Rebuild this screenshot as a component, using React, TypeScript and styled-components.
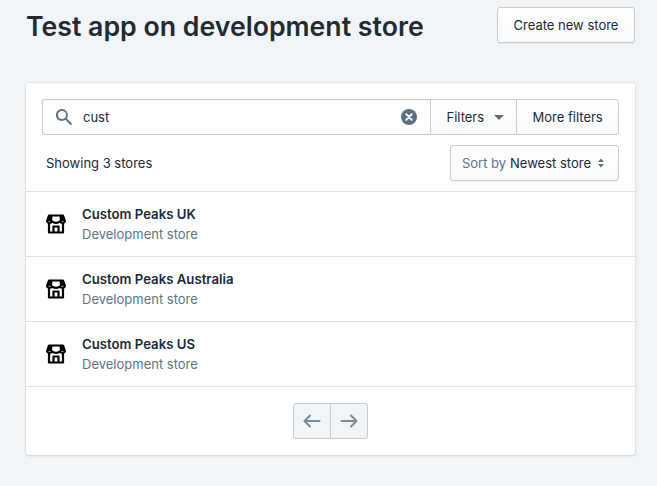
import React from "react";
import styled, { createGlobalStyle } from "styled-components";

const Global = createGlobalStyle`
  html, body { margin: 0; padding: 0; background: #f2f5f8; }
  body { font-family: Inter, "Noto Sans", sans-serif; color: #212b36; font-size: 13px; -webkit-font-smoothing: antialiased; }
`;

const Page = styled.div`
  width: 657px;
  height: 486px;
  box-sizing: border-box;
  padding: 7px 22px 0 26px;
  overflow: hidden;
`;
const Header = styled.header`
  display: flex;
  justify-content: space-between;
  align-items: flex-start;
  height: 76px;
`;
const Title = styled.h1`
  margin: 1px 0 0;
  font-size: 26.7px;
  line-height: 36px;
  font-weight: 600;
  color: #212b36;
`;
const Button = styled.button`
  font: inherit;
  font-size: 13px;
  color: #212b36;
  background: linear-gradient(180deg, #fff, #f9fafb);
  border: 1px solid #c4cdd5;
  border-radius: 3px;
  box-shadow: 0 1px 0 rgba(22, 29, 37, 0.05);
  padding: 0;
  height: 36px;
  cursor: pointer;
`;
const CreateButton = styled(Button)`
  width: 138px;
`;
const Card = styled.section`
  background: #fff;
  border-radius: 3px;
  box-shadow: 0 0 0 1px rgba(63, 63, 68, 0.05), 0 1px 3px 0 rgba(63, 63, 68, 0.15);
`;
const Toolbar = styled.div`
  padding: 16px 16px 0;
  border-bottom: 1px solid #dfe3e8;
  height: 92px;
`;
const SearchRow = styled.div`
  display: flex;
  height: 36px;
`;
const SearchField = styled.label`
  flex: 1;
  display: flex;
  align-items: center;
  box-sizing: border-box;
  border: 1px solid #c4cdd5;
  border-right: 0;
  border-radius: 3px 0 0 3px;
  box-shadow: inset 0 1px 0 rgba(99, 115, 129, 0.05);
  padding: 0 13px 0 11px;
`;
const SearchInput = styled.input`
  flex: 1;
  min-width: 0;
  border: 0;
  outline: 0;
  padding: 0;
  margin-left: 9px;
  font: inherit;
  color: #212b36;
  background: transparent;
`;
const GroupButton = styled(Button)<{ $width: string; $last?: boolean }>`
  display: flex;
  align-items: center;
  gap: 10px;
  box-sizing: border-box;
  width: ${(p) => p.$width};
  padding: 0 0 0 15.5px;
  border-radius: ${(p) => (p.$last ? "0 3px 3px 0" : "0")};
  border-right-width: ${(p) => (p.$last ? "1px" : "0")};
  box-shadow: none;
`;
const SummaryRow = styled.div`
  display: flex;
  justify-content: space-between;
  align-items: center;
  margin-top: 10px;
  padding-left: 4px;
`;
const Sort = styled(Button)`
  display: flex;
  align-items: center;
  gap: 4px;
  padding: 0 13px 0 11px;
  svg {
    margin-left: 2px;
  }
`;
const SortLabel = styled.span`
  color: #637381;
`;
const List = styled.ul`
  list-style: none;
  margin: 0;
  padding: 0;
`;
const Row = styled.li`
  display: flex;
  align-items: center;
  height: 64px;
  padding: 0 20px;
  gap: 16px;
  border-bottom: 1px solid #dfe3e8;
`;
const RowText = styled.div`
  display: flex;
  flex-direction: column;
`;
const StoreName = styled.span`
  font-size: 13.2px;
  font-weight: 600;
  line-height: 20px;
  color: #212b36;
`;
const StoreType = styled.span`
  line-height: 20px;
  color: #637381;
`;
const Pagination = styled.nav`
  display: flex;
  justify-content: center;
  padding: 16px 0;
`;
const PageButton = styled.button<{ $side: "l" | "r" }>`
  width: ${(p) => (p.$side === "l" ? "38px" : "37px")};
  height: 36px;
  display: flex;
  align-items: center;
  justify-content: center;
  padding: 0;
  background: #f2f5f8;
  border: 1px solid #c4cdd5;
  border-left-width: ${(p) => (p.$side === "l" ? "1px" : "0")};
  border-radius: ${(p) => (p.$side === "l" ? "3px 0 0 3px" : "0 3px 3px 0")};
`;

const SearchIcon = () => (
  <svg width="20" height="20" viewBox="0 0 20 20" fill="#5c6f80">
    <path d="M8 12a4 4 0 1 1 0-8 4 4 0 0 1 0 8zm9.700 4.300l-4.900-4.900A6 6 0 1 0 8 14a6 6 0 0 0 3.400-1.200l4.900 4.900a1 1 0 0 0 1.400-1.400z" />
  </svg>
);
const ClearIcon = () => (
  <svg width="16" height="16" viewBox="0 0 16 16">
    <circle cx="8" cy="8" r="8" fill="#5c6f80" />
    <path d="M5.300 5.300l5.400 5.400M10.700 5.300l-5.400 5.400" stroke="#fff" strokeWidth="2" strokeLinecap="round" />
  </svg>
);
const Caret = () => (
  <svg width="10" height="5" viewBox="0 0 10 5" fill="#5c6f80">
    <path d="M0 0h10L5 5z" />
  </svg>
);
const UpDown = () => (
  <svg width="8" height="12" viewBox="0 0 8 12" fill="#5c6f80">
    <path d="M4 1.500L7 5H1zM4 10.500L1 7h6z" />
  </svg>
);
const StoreIcon = () => (
  <svg width="20" height="20" viewBox="0 0 20 20" fill="none" stroke="#000" strokeWidth="2.200" strokeLinejoin="round">
    <path d="M3 1.500h14l1.800 5c.3 1.200-.7 2.300-2 2.300-1.200 0-2.400-.6-3-1.500-.6.9-2 1.500-3.800 1.500S6.800 8.200 6.200 7.300c-.6.9-1.800 1.500-3 1.500-1.300 0-2.300-1.100-2-2.300z" />
    <path d="M3 9v9.500h14V9" />
    <path d="M7.500 18.500V12.500h5v6" />
    <path d="M3 2h3.500l-.5 5.500-4.500-.7zM17 2h-3.500l.5 5.500 4.500-.7z" fill="#000" stroke="none" />
  </svg>
);
const Arrow = ({ right }: { right?: boolean }) => (
  <svg width="18" height="14" viewBox="0 0 18 14" fill="none" stroke="#7b8b99" strokeWidth="2" strokeLinecap="round" strokeLinejoin="round">
    {right ? <path d="M1.500 7h15M11 1.500L16.500 7 11 12.500" /> : <path d="M16.500 7h-15M7 1.500L1.500 7 7 12.500" />}
  </svg>
);

const stores = ["Custom Peaks UK", "Custom Peaks Australia", "Custom Peaks US"];

export default function App() {
  return (
    <Page>
      <Global />
      <Header>
        <Title>Test app on development store</Title>
        <CreateButton>Create new store</CreateButton>
      </Header>
      <Card>
        <Toolbar>
          <SearchRow>
            <SearchField>
              <SearchIcon />
              <SearchInput defaultValue="cust" />
              <ClearIcon />
            </SearchField>
            <GroupButton $width="86px">
              Filters <Caret />
            </GroupButton>
            <GroupButton $width="103px" $last>More filters</GroupButton>
          </SearchRow>
          <SummaryRow>
            <span>Showing 3 stores</span>
            <Sort>
              <SortLabel>Sort by</SortLabel> Newest store <UpDown />
            </Sort>
          </SummaryRow>
        </Toolbar>
        <List>
          {stores.map((s) => (
            <Row key={s}>
              <StoreIcon />
              <RowText>
                <StoreName>{s}</StoreName>
                <StoreType>Development store</StoreType>
              </RowText>
            </Row>
          ))}
        </List>
        <Pagination>
          <PageButton $side="l"><Arrow /></PageButton>
          <PageButton $side="r"><Arrow right /></PageButton>
        </Pagination>
      </Card>
    </Page>
  );
}
